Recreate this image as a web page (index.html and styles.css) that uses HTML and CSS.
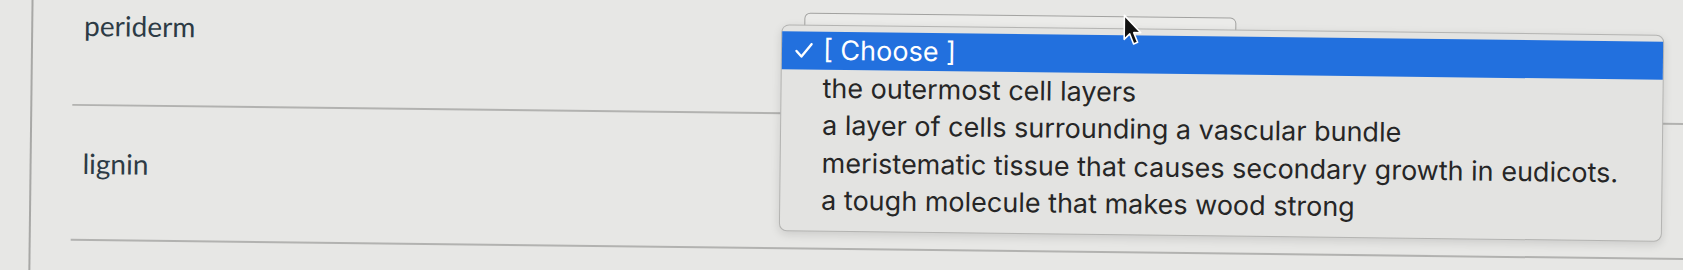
FILE: index.html
```html
<!DOCTYPE html>
<html lang="en">

<head>
    <meta charset="UTF-8">
    <meta name="viewport" content="width=device-width, initial-scale=1.0">
    <title>Matching</title>
    <link rel="stylesheet" href="styles.css">
</head>

<body>
    <div class="page">
        <div class="quiz">
            <div class="matchRow">
                <div class="term">periderm</div>
                <div class="answer">
                    <div class="selectBox"></div>
                </div>
            </div>
            <div class="matchRow">
                <div class="term">lignin</div>
                <div class="answer">
                    <div class="selectBox"></div>
                </div>
            </div>
        </div>

        <ul class="menu">
            <li class="selected">
                <svg class="check" viewBox="0 0 18 16" width="18" height="16">
                    <polyline points="1.5,8.5 6.5,14 16.5,1.5" />
                </svg>
                [ Choose ]
            </li>
            <li>the outermost cell layers</li>
            <li>a layer of cells surrounding a vascular bundle</li>
            <li>meristematic tissue that causes secondary growth in eudicots.</li>
            <li>a tough molecule that makes wood strong</li>
        </ul>

        <svg class="cursor" viewBox="0 0 20 34" width="20" height="34">
            <path d="M2 2 L2 26 L7.5 20.5 L11.5 30.5 L15.5 28.8 L11.5 19.2 L18.5 19.2 Z" />
        </svg>
    </div>
</body>

</html>
```

FILE: styles.css
```css
html,
body {
    height: 100%;
}

body {
    margin: 0;
    overflow: hidden;
    background: #e7e7e5;
}

/* the photo is taken a little crooked */
.page {
    position: relative;
    display: flow-root;
    width: 1700px;
    height: 270px;
    transform: rotate(0.68deg);
    transform-origin: 841px 135px;
}

.quiz {
    margin-left: 30px;
    margin-top: -20px;
    height: 320px;
    border-left: 2px solid #a8a8a6;
}

.matchRow {
    display: flex;
    margin-left: 40px;
    height: 133px;
    border-bottom: 2px solid #b2b2b0;
}

.term {
    box-sizing: border-box;
    width: 731px;
    padding: 40px 0 0 11px;
    font-family: Lato, sans-serif;
    font-size: 28px;
    color: #2d3b45;
}

.matchRow:first-child .term {
    padding-top: 37px;
}

.answer {
    padding-top: 33px;
}

.selectBox {
    width: 430px;
    height: 40px;
    border: 1px solid #a2a2a0;
    border-radius: 6px;
    background: #ebebe9;
}

.menu {
    position: absolute;
    left: 780px;
    top: 25px;
    width: 883px;
    box-sizing: border-box;
    margin: 0;
    padding: 6px 0 11px;
    list-style: none;
    background: #e3e3e1;
    border: 1px solid #b4b4b2;
    border-radius: 8px;
    box-shadow: 0 3px 10px rgba(0, 0, 0, 0.12);
    font-family: Inter, "Noto Sans", sans-serif;
    font-size: 27px;
    color: #262626;
}

.menu li {
    position: relative;
    height: 37.5px;
    line-height: 37.5px;
    padding-left: 41px;
    white-space: nowrap;
}

.menu li.selected {
    background: #2270de;
    color: #fff;
}

.check {
    position: absolute;
    left: 13px;
    top: 11px;
}

.check polyline {
    fill: none;
    stroke: #fff;
    stroke-width: 2.4;
    stroke-linecap: round;
    stroke-linejoin: round;
}

.cursor {
    position: absolute;
    left: 1121px;
    top: 10px;
}

.cursor path {
    fill: #111;
    stroke: #fff;
    stroke-width: 1.6;
    stroke-linejoin: round;
}
```
